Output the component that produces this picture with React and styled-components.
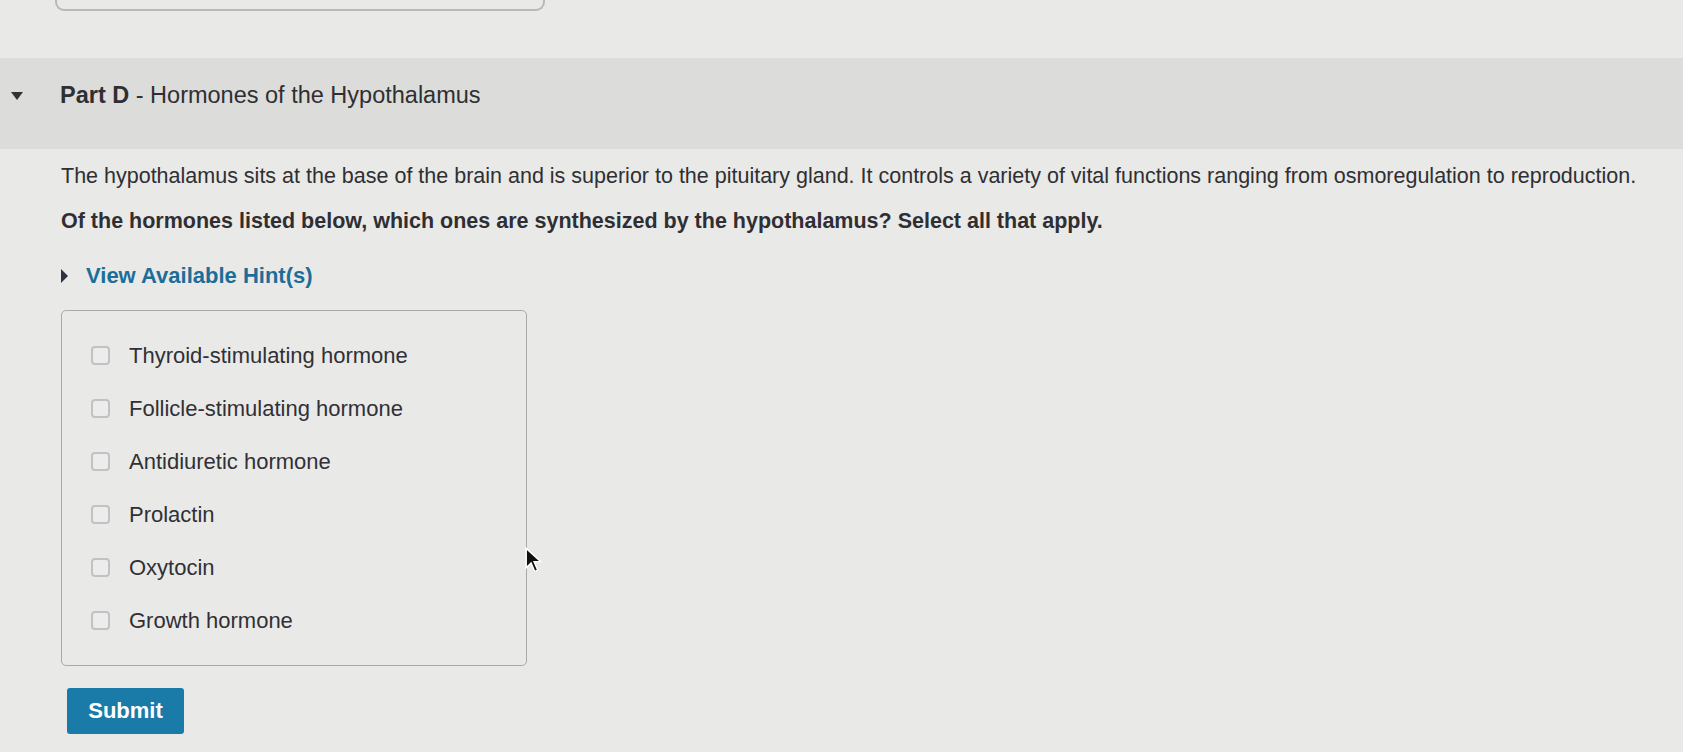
import React from 'react';
import styled, { createGlobalStyle } from 'styled-components';

const Global = createGlobalStyle`
  html, body {
    margin: 0;
    padding: 0;
    background: #e9e9e7;
    font-family: "Liberation Sans", Arial, sans-serif;
    color: #2f2f33;
  }
`;

const Page = styled.div`
  position: relative;
  width: 1683px;
  height: 752px;
  overflow: hidden;
`;

const PrevCard = styled.div`
  margin-left: 55px;
  width: 486px;
  height: 9px;
  border: 2px solid #b9b9b9;
  border-top: none;
  border-radius: 0 0 9px 9px;
`;

const PartHeader = styled.div`
  margin-top: 47px;
  height: 91px;
  box-sizing: border-box;
  background: #dcdcda;
  display: flex;
  align-items: flex-start;
  padding: 23px 0 0 11px;
  font-size: 23.5px;
  line-height: 28px;
`;

const DownCaret = styled.span`
  width: 0;
  height: 0;
  margin-top: 11px;
  border-left: 6.5px solid transparent;
  border-right: 6.5px solid transparent;
  border-top: 8px solid #333;
  margin-right: 37px;
`;

const PartLabel = styled.b`
  font-weight: 700;
`;

const Body = styled.div`
  padding: 5px 0 0 61px;
`;

const Para = styled.p`
  margin: 0;
  font-size: 21.5px;
  line-height: 45px;
  white-space: nowrap;
  font-weight: ${p => (p.$bold ? 700 : 400)};
`;

const HintToggle = styled.div`
  display: flex;
  align-items: center;
  margin-top: 9px;
  height: 45px;
  font-size: 22px;
  font-weight: 700;
  color: #1c6e98;
`;

const RightCaret = styled.span`
  width: 0;
  height: 0;
  border-top: 7.5px solid transparent;
  border-bottom: 7.5px solid transparent;
  border-left: 7.5px solid #2b3440;
  margin-right: 18px;
`;

const OptionBox = styled.div`
  margin-top: 12px;
  width: 466px;
  height: 356px;
  border: 1.5px solid #a9a9a9;
  border-radius: 5px;
  padding: 18px 0 0 29px;
  box-sizing: border-box;
  display: flex;
  flex-direction: column;
`;

const Option = styled.label`
  display: flex;
  align-items: center;
  height: 53px;
  font-size: 22px;
  color: #303036;
`;

const Check = styled.span`
  width: 19px;
  height: 19px;
  border: 2px solid #c2c2c2;
  border-radius: 4px;
  background: #ececec;
  margin-right: 19px;
  box-sizing: border-box;
`;

const SubmitButton = styled.button`
  margin-top: 22px;
  margin-left: 6px;
  width: 117px;
  height: 46px;
  background: #1a7ba9;
  border: none;
  border-radius: 3px;
  color: #fff;
  font-family: inherit;
  font-size: 22px;
  font-weight: 700;
`;

const Cursor = styled.svg`
  position: absolute;
  left: 525px;
  top: 547px;
`;

const options = [
  'Thyroid-stimulating hormone',
  'Follicle-stimulating hormone',
  'Antidiuretic hormone',
  'Prolactin',
  'Oxytocin',
  'Growth hormone',
];

export default function App() {
  return (
    <Page>
      <Global />
      <PrevCard />
      <PartHeader>
        <DownCaret />
        <span>
          <PartLabel>Part D</PartLabel> - Hormones of the Hypothalamus
        </span>
      </PartHeader>
      <Body>
        <Para>
          The hypothalamus sits at the base of the brain and is superior to the pituitary gland. It controls a variety of vital functions ranging from osmoregulation to reproduction.
        </Para>
        <Para $bold>
          Of the hormones listed below, which ones are synthesized by the hypothalamus? Select all that apply.
        </Para>
        <HintToggle>
          <RightCaret />
          View Available Hint(s)
        </HintToggle>
        <OptionBox>
          {options.map(o => (
            <Option key={o}>
              <Check />
              {o}
            </Option>
          ))}
        </OptionBox>
        <SubmitButton>Submit</SubmitButton>
      </Body>
      <Cursor width="17" height="27" viewBox="0 0 14 22">
        <path d="M1 1 L1 17 L5 13 L8 20 L10.5 19 L7.5 12 L13 12 Z" fill="#111" stroke="#fff" strokeWidth="1.2" />
      </Cursor>
    </Page>
  );
}
